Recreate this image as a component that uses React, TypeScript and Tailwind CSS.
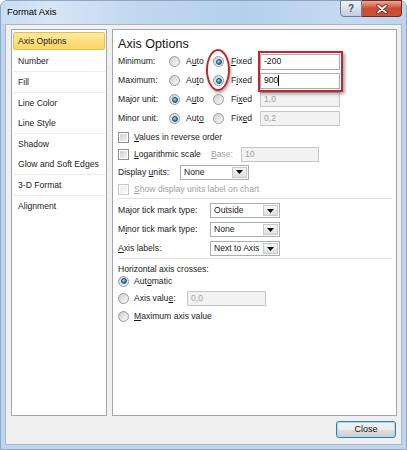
import React from 'react';

type KeyProps = { text: string; at: number };

// label with an underlined access key
function Key({ text, at }: KeyProps) {
  return (
    <>
      {text.slice(0, at)}
      <span className="underline underline-offset-[1px]">{text[at]}</span>
      {text.slice(at + 1)}
    </>
  );
}

function Radio({ checked = false }: { checked?: boolean }) {
  return (
    <span className="w-[11px] h-[11px] shrink-0 rounded-full border border-[#9a9a9a] bg-gradient-to-br from-[#cfcfcf] to-[#fbfbfb] flex items-center justify-center">
      {checked && (
        <span className="w-[6px] h-[6px] rounded-full border border-[#1a4f7a] bg-[radial-gradient(circle_at_35%_35%,#a8e0fb,#2a86c4_60%,#16507f)]" />
      )}
    </span>
  );
}

function Check({ disabled = false }: { disabled?: boolean }) {
  return (
    <span
      className={`w-[11px] h-[11px] shrink-0 border p-[1px] ${
        disabled ? 'border-[#c8c8c8] bg-white' : 'border-[#8e8f8f] bg-white'
      }`}
    >
      <span
        className={`block w-full h-full bg-gradient-to-br ${
          disabled ? 'from-[#ececec] to-[#f8f8f8]' : 'from-[#cfcfcf] to-[#f4f4f4]'
        }`}
      />
    </span>
  );
}

function Field({ value, w, h = 'h-[16px]', disabled = false, caret = false }: { value: string; w: string; h?: string; disabled?: boolean; caret?: boolean }) {
  return (
    <div
      className={`${w} ${h} shrink-0 border flex items-center px-[3px] ${
        disabled ? 'border-[#c3c6cc] bg-[#f2f2f2] text-[#a2a2a2]' : 'border-[#abadb3] bg-white text-[#111]'
      }`}
    >
      {value}
      {caret && <span className="w-[1px] h-[11px] bg-black" />}
    </div>
  );
}

function Combo({ value, w }: { value: string; w: string }) {
  return (
    <div className={`${w} h-[15px] shrink-0 border border-[#abadb3] bg-white flex items-stretch`}>
      <span className="flex-1 pl-[3px] flex items-center">{value}</span>
      <span className="w-[15px] m-[1px] border border-[#c9c9c9] bg-gradient-to-b from-[#f6f6f6] to-[#dedede] flex items-center justify-center">
        <svg width="7" height="4" viewBox="0 0 7 4">
          <path d="M0 0h7L3.5 4z" fill="#111" />
        </svg>
      </span>
    </div>
  );
}

const categories = [
  ['Axis Options'],
  ['Number'],
  ['Fill'],
  ['Line Color', 'Line Style'],
  ['Shadow', 'Glow and Soft Edges'],
  ['3-D Format'],
  ['Alignment'],
];

const bounds = [
  { label: 'Minimum:', auto: 1, fixed: 0, value: '-200' },
  { label: 'Maximum:', auto: 2, fixed: 1, value: '900', caret: true },
  { label: 'Major unit:', auto: 1, fixed: 2, value: '1,0', isAuto: true },
  { label: 'Minor unit:', auto: 3, fixed: 3, value: '0,2', isAuto: true },
];

const ticks = [
  { label: 'Major tick mark type:', at: 2, value: 'Outside' },
  { label: 'Minor tick mark type:', at: 1, value: 'None' },
  { label: 'Axis labels:', at: 0, value: 'Next to Axis' },
];

export default function App() {
  return (
    <div className="w-[407px] h-[450px] bg-white font-['Liberation_Sans',Arial,sans-serif] text-[8.6px] text-[#1b1b1b]">
      <div className="w-full h-full rounded-t-[7px] border border-[#8fa7c4] bg-[#bdd5ef] flex flex-col">
        {/* caption */}
        <div className="h-[23px] shrink-0 flex rounded-t-[6px] bg-[linear-gradient(90deg,#c9ddf2_0%,#d7e6f6_12%,#c0d7ef_35%,#b6d0ec_60%,#c4daf0_85%,#bcd4ee_100%)]">
          <span className="pl-[6px] self-center text-[9.4px] text-black">Format Axis</span>
          <div className="ml-auto mr-[4px] -mt-[1px] flex items-start">
            <div className="w-[22px] h-[17px] rounded-bl-[4px] border border-[#6f7f94] bg-gradient-to-b from-[#eef2f7] via-[#d9e1ea] to-[#c3cedb] flex items-center justify-center text-[10px] font-bold text-[#4c5866]">
              ?
            </div>
            <div className="w-[40px] h-[17px] rounded-br-[4px] border border-l-0 border-[#6e2a20] bg-gradient-to-b from-[#e9a99a] via-[#cf4a31] to-[#c7523d] flex items-center justify-center">
              <svg width="12" height="10" viewBox="0 0 12 10">
                <path d="M2 1.5l8 7M10 1.5l-8 7" stroke="#5a1f14" strokeWidth="3.4" strokeLinecap="round" />
                <path d="M2 1.5l8 7M10 1.5l-8 7" stroke="#fff" strokeWidth="1.8" strokeLinecap="round" />
              </svg>
            </div>
          </div>
        </div>

        {/* client area */}
        <div className="mx-[4px] h-[421px] shrink-0 border border-[#a9b6c6] bg-[#f0f0f0] flex flex-col pl-[5px] pr-[4px] pt-[4px]">
          <div className="h-[387px] flex gap-[5px]">
            {/* category list */}
            <div className="w-[96px] shrink-0 border border-[#a3a7ad] bg-white pt-[1px] px-[1px]">
              {categories.map((group, gi) => (
                <div key={gi} className={gi > 1 ? 'border-t border-[#ececec]' : ''}>
                  {group.map((name) => (
                    <div key={name} className="h-[20px] flex items-center">
                      {name === 'Axis Options' ? (
                        <div className="w-full h-[18px] rounded-[2px] border border-[#e3bd58] bg-gradient-to-b from-[#fee99c] to-[#fcd662] flex items-center pl-[4px]">
                          {name}
                        </div>
                      ) : (
                        <span className="pl-[5px]">{name}</span>
                      )}
                    </div>
                  ))}
                </div>
              ))}
            </div>

            {/* options page */}
            <div className="relative flex-1 border border-[#a3a7ad] bg-white pl-[5px] pt-[6px] flex flex-col">
              <div className="h-[16px] leading-[16px] text-[12.6px] text-[#151515]">Axis Options</div>

              {bounds.map((b) => (
                <div key={b.label} className="h-[19px] flex items-center">
                  <span className="w-[51px] shrink-0">{b.label}</span>
                  <Radio checked={!!b.isAuto} />
                  <span className="ml-[6px] w-[27px] shrink-0">
                    <Key text="Auto" at={b.auto} />
                  </span>
                  <Radio checked={!b.isAuto} />
                  <span className="ml-[7px] w-[29px] shrink-0">
                    <Key text="Fixed" at={b.fixed} />
                  </span>
                  <Field value={b.value} w="w-[80px]" h={b.isAuto ? 'h-[15px]' : 'h-[16px]'} disabled={b.isAuto} caret={b.caret} />
                </div>
              ))}

              <div className="h-[18px] flex items-center">
                <Check />
                <span className="ml-[5px]">
                  <Key text="Values in reverse order" at={0} />
                </span>
              </div>
              <div className="h-[17px] flex items-center">
                <Check />
                <span className="ml-[5px] w-[77px] shrink-0">
                  <Key text="Logarithmic scale" at={0} />
                </span>
                <span className="w-[30px] shrink-0 text-[#a2a2a2]">
                  <Key text="Base:" at={0} />
                </span>
                <Field value="10" w="w-[78px]" h="h-[15px]" disabled />
              </div>
              <div className="h-[18px] flex items-center">
                <span className="w-[62px] shrink-0">
                  <Key text="Display units:" at={8} />
                </span>
                <Combo value="None" w="w-[69px]" />
              </div>
              <div className="h-[17px] flex items-center">
                <Check disabled />
                <span className="ml-[5px] text-[#a2a2a2]">
                  <Key text="Show display units label on chart" at={0} />
                </span>
              </div>

              <div className="h-[1px] mr-[4px] bg-[#e2e2e2]" />

              <div className="pt-[2px]">
                {ticks.map((t) => (
                  <div key={t.label} className="h-[19px] flex items-center">
                    <span className="w-[92px] shrink-0">
                      <Key text={t.label} at={t.at} />
                    </span>
                    <Combo value={t.value} w="w-[70px]" />
                  </div>
                ))}
              </div>

              <div className="h-[1px] mr-[4px] bg-[#e2e2e2]" />

              <div className="pt-[4px] h-[16px] flex items-center">Horizontal axis crosses:</div>
              <div className="h-[12px] flex items-center">
                <Radio checked />
                <span className="ml-[5px]">
                  <Key text="Automatic" at={3} />
                </span>
              </div>
              <div className="mt-[2px] h-[18px] flex items-center">
                <Radio />
                <span className="ml-[5px] w-[53px] shrink-0">
                  <Key text="Axis value:" at={9} />
                </span>
                <Field value="0,0" w="w-[79px]" h="h-[15px]" disabled />
              </div>
              <div className="h-[18px] flex items-center">
                <Radio />
                <span className="ml-[5px]">
                  <Key text="Maximum axis value" at={0} />
                </span>
              </div>

              {/* red callouts around the fixed bounds */}
              <div className="absolute left-[93px] top-[19px] w-[24px] h-[42px] rounded-[50%] border-2 border-[#c0262c] shadow-[1px_2px_3px_rgba(0,0,0,0.35)]" />
              <div className="absolute left-[145px] top-[21px] w-[85px] h-[41px] border-2 border-[#c0262c] shadow-[2px_2px_3px_rgba(0,0,0,0.35)]" />
            </div>
          </div>

          <div className="mt-[5px] flex justify-end pr-[1px]">
            <button className="w-[60px] h-[17px] rounded-[3px] border border-[#3d7bad] bg-[linear-gradient(180deg,#f2f2f2_0%,#ebebeb_50%,#dddddd_51%,#cfcfcf_100%)] shadow-[inset_0_0_0_1px_#9fdcf7] text-[9px] text-[#111]">
              Close
            </button>
          </div>
        </div>
      </div>
    </div>
  );
}
